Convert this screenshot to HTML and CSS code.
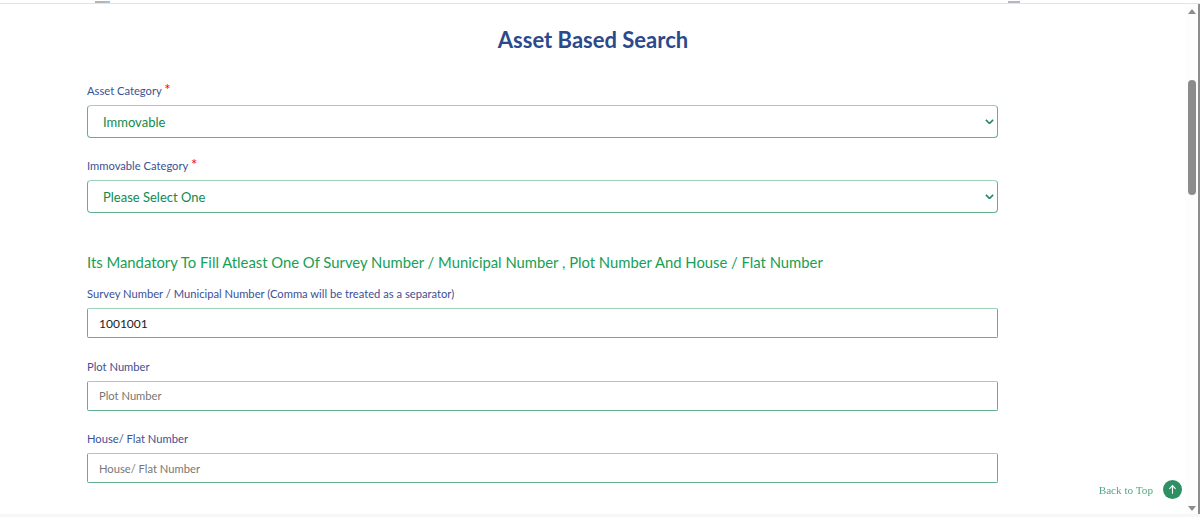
FILE: index.html
```html
<!DOCTYPE html>
<html lang="en">
  <head>
    <meta charset="UTF-8" />
    <meta name="viewport" content="width=device-width, initial-scale=1.0" />
    <title>Asset Based Search</title>
    <link rel="stylesheet" href="styles.css">
  </head>
  <body>
    <div class="top-strip">
      <span class="tab-bit tab-left"></span>
      <span class="tab-bit tab-right"></span>
    </div>

    <div class="container">
      <h1 class="title">Asset Based Search</h1>

      <form class="search-form">
        <div class="field field-select">
          <label>Asset Category <span class="req">*</span></label>
          <div class="select-box">
            <span>Immovable</span>
            <svg class="chevron" viewBox="0 0 10 6"><path d="M1 1l4 4 4-4" /></svg>
          </div>
        </div>

        <div class="field field-select">
          <label>Immovable Category <span class="req">*</span></label>
          <div class="select-box">
            <span>Please Select One</span>
            <svg class="chevron" viewBox="0 0 10 6"><path d="M1 1l4 4 4-4" /></svg>
          </div>
        </div>

        <h3 class="notice">Its Mandatory To Fill Atleast One Of Survey Number / Municipal Number , Plot Number And House / Flat Number</h3>

        <div class="field">
          <label>Survey Number / Municipal Number (Comma will be treated as a separator)</label>
          <input type="text" value="1001001" />
        </div>

        <div class="field">
          <label>Plot Number</label>
          <input type="text" placeholder="Plot Number" />
        </div>

        <div class="field">
          <label>House/ Flat Number</label>
          <input type="text" placeholder="House/ Flat Number" />
        </div>
      </form>
    </div>

    <!-- Back to top -->
    <a class="back-top" href="#">
      Back to Top
      <span class="back-top-btn">
        <svg viewBox="0 0 12 12"><path d="M6 10.5V2M2.6 5.2L6 1.8l3.4 3.4" /></svg>
      </span>
    </a>

    <!-- Scrollbar -->
    <div class="scrollbar">
      <span class="arrow arrow-up"></span>
      <span class="thumb"></span>
      <span class="arrow arrow-down"></span>
    </div>

    <div class="bottom-strip"></div>
  </body>
</html>
```

FILE: styles.css
```css
html,
body {
  height: 100%;
}
body {
  margin: 0;
  overflow: hidden;
  background: #fff;
  font-family: Lato, "Open Sans", sans-serif;
}
.top-strip {
  display: flex;
  align-items: flex-end;
  height: 3px;
  border-bottom: 1px solid #e3e3e3;
}
.tab-bit {
  height: 2px;
  background: #b4b8c2;
}
.tab-left {
  width: 15px;
  margin-left: 95px;
  background: linear-gradient(to right, #b4b4b4 70%, #a3bfe6 70%);
}
.tab-right {
  width: 12px;
  margin-left: 898px;
}
.container {
  width: 911px;
  margin-left: 87px;
}
.title {
  margin: 0;
  padding-top: 22px;
  width: 1012px;
  text-align: center;
  font-size: 22px;
  line-height: 27px;
  font-weight: 700;
  color: #2b4a8b;
}
.search-form {
  padding-top: 30px;
}
.field label {
  display: block;
  font-size: 11.2px;
  line-height: 15px;
  color: #3b5195;
  margin-bottom: 7px;
}
.field {
  margin-bottom: 20.6px;
}
.field-select {
  margin-bottom: 20px;
}
.req {
  color: #f00;
  font-size: 15px;
  line-height: 10px;
}
.select-box {
  display: flex;
  align-items: center;
  justify-content: space-between;
  box-sizing: border-box;
  height: 33px;
  padding: 0 3px 0 15px;
  border: 1px solid #62b08e;
  border-top-color: #9fd0b8;
  border-radius: 4px;
  color: #0f8a4d;
  font-size: 13px;
}
.chevron {
  width: 9px;
  height: 5.4px;
  fill: none;
  stroke: #218a5c;
  stroke-width: 1.8;
}
.notice {
  margin: 0 0 14px;
  padding-top: 19px;
  font-size: 14.82px;
  line-height: 20px;
  font-weight: 400;
  color: #16a055;
}
input {
  display: block;
  box-sizing: border-box;
  width: 100%;
  height: 30px;
  padding: 0 11px;
  border: 1px solid #62b08e;
  border-top-color: #9fd0b8;
  border-radius: 2px;
  outline: none;
  font-family: inherit;
  font-size: 12px;
  color: #222;
}
input::placeholder {
  font-size: 11.2px;
  color: #777;
}
.back-top {
  position: fixed;
  right: 18px;
  bottom: 18px;
  display: flex;
  align-items: center;
  gap: 10px;
  font-family: "Liberation Serif", serif;
  font-size: 11.2px;
  color: #4fa981;
  text-decoration: none;
}
.back-top-btn {
  display: flex;
  align-items: center;
  justify-content: center;
  width: 19px;
  height: 19px;
  border-radius: 50%;
  background: #2e8f63;
}
.back-top-btn svg {
  width: 11px;
  height: 11px;
  fill: none;
  stroke: #fff;
  stroke-width: 1.2;
}
.scrollbar {
  position: fixed;
  top: 4px;
  right: 0;
  bottom: 3px;
  box-sizing: border-box;
  width: 15px;
  background: #fdfdfd;
  border-right: 2px solid #8c8c8c;
}
.thumb {
  position: absolute;
  left: 3px;
  top: 76px;
  width: 8px;
  height: 115px;
  border-radius: 4px;
  background: #8c8c8c;
}
.arrow {
  position: absolute;
  left: 3px;
  width: 0;
  height: 0;
  border-left: 4.5px solid transparent;
  border-right: 4.5px solid transparent;
}
.arrow-up {
  top: 5px;
  border-bottom: 5px solid #8c8c8c;
}
.arrow-down {
  bottom: 3px;
  border-top: 5px solid #8c8c8c;
}
.bottom-strip {
  position: fixed;
  left: 0;
  right: 0;
  bottom: 0;
  height: 3px;
  background: #f7f7f7;
}
```
